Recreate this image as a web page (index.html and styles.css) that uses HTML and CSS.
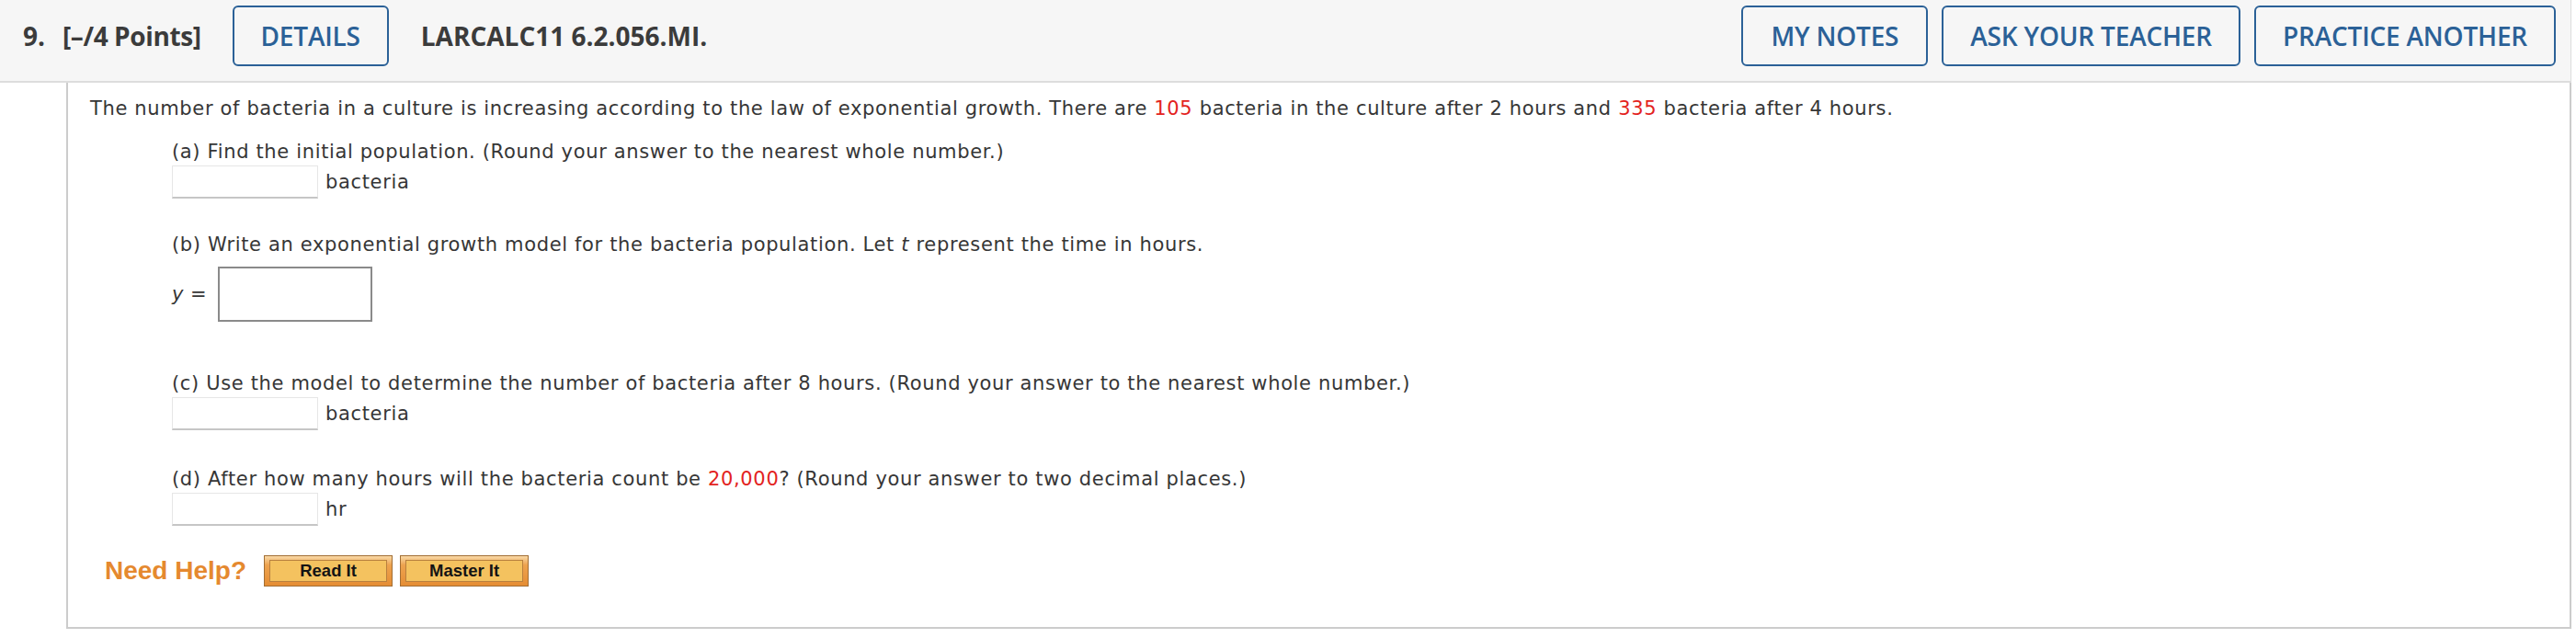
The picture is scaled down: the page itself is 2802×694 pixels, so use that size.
FILE: index.html
```html
<!DOCTYPE html>
<html>
<head>
<meta charset="utf-8">
<link rel="stylesheet" href="styles.css">
</head>
<body>
<div class="question">
  <div class="qhead">
    <div class="qhead-left">
      <span class="qnum">9.</span>
      <span class="qpts">[–/4 Points]</span>
      <span class="hbtn">DETAILS</span>
      <span class="qcode">LARCALC11 6.2.056.MI.</span>
    </div>
    <div class="qhead-right">
      <span class="hbtn">MY NOTES</span>
      <span class="hbtn">ASK YOUR TEACHER</span>
      <span class="hbtn">PRACTICE ANOTHER</span>
    </div>
  </div>
  <div class="qbody">
    <p class="intro">The number of bacteria in a culture is increasing according to the law of exponential growth. There are <span class="red">105</span> bacteria in the culture after 2 hours and <span class="red">335</span> bacteria after 4 hours.</p>

    <div class="part part-a">
      <p class="ptext">(a) Find the initial population. (Round your answer to the nearest whole number.)</p>
      <div class="arow"><span class="ans"></span><span class="unit">bacteria</span></div>
    </div>

    <div class="part part-b">
      <p class="ptext">(b) Write an exponential growth model for the bacteria population. Let <i>t</i> represent the time in hours.</p>
      <div class="yrow"><span class="ylabel"><i>y</i> =</span><span class="ybox"></span></div>
    </div>

    <div class="part part-c">
      <p class="ptext">(c) Use the model to determine the number of bacteria after 8 hours. (Round your answer to the nearest whole number.)</p>
      <div class="arow"><span class="ans"></span><span class="unit">bacteria</span></div>
    </div>

    <div class="part part-d">
      <p class="ptext">(d) After how many hours will the bacteria count be <span class="red">20,000</span>? (Round your answer to two decimal places.)</p>
      <div class="arow"><span class="ans"></span><span class="unit">hr</span></div>
    </div>

    <div class="help">
      <span class="help-label">Need Help?</span>
      <span class="hlp-btn"><span class="hlp-inner">Read It</span></span>
      <span class="hlp-btn"><span class="hlp-inner">Master It</span></span>
    </div>
  </div>
</div>
</body>
</html>
```

FILE: styles.css
```css
html, body {
  margin: 0;
  padding: 0;
  background: #ffffff;
}

.question {
  width: 2797px;
}

.qhead {
  display: flex;
  justify-content: space-between;
  align-items: center;
  box-sizing: border-box;
  height: 90px;
  padding: 7px 16px 17px 25px;
  background: #f6f6f6;
  border-bottom: 2px solid #dddddd;
  border-right: 1px solid #dddddd;
  font-family: "Open Sans", "DejaVu Sans", sans-serif;
  font-size: 28px;
  color: #3b3b3b;
}

.qhead-left,
.qhead-right {
  display: flex;
  align-items: center;
}

.qhead-right {
  gap: 15px;
}

.qnum {
  font-weight: 700;
  margin-right: 19px;
}

.qpts {
  font-weight: 700;
  letter-spacing: -0.4px;
  margin-right: 34px;
}

.qcode {
  font-weight: 700;
  margin-left: 35px;
}

.hbtn {
  display: flex;
  align-items: center;
  box-sizing: border-box;
  height: 66px;
  padding: 0 29px;
  border: 2px solid #2b6197;
  border-radius: 6px;
  color: #2b6197;
  font-weight: 600;
  letter-spacing: -0.2px;
}

.qhead-right .hbtn:first-child {
  padding: 0 30px;
}

.qbody {
  margin-left: 72px;
  padding: 13px 24px 44px 24px;
  border-left: 2px solid #cccccc;
  border-right: 2px solid #cccccc;
  border-bottom: 2px solid #cccccc;
  font-family: "DejaVu Sans", Verdana, sans-serif;
  font-size: 21px;
  letter-spacing: 0.65px;
  line-height: 30px;
  color: #363636;
}

.intro {
  margin: 0;
}

.red {
  color: #e3231e;
}

.part {
  padding-left: 89px;
}

.ptext {
  margin: 0;
}

.part-a { margin-top: 17px; }
.part-b { margin-top: 35px; }
.part-c { margin-top: 52px; }
.part-d { margin-top: 38px; }

.arow {
  display: flex;
  align-items: center;
  gap: 8px;
}

.ans {
  display: block;
  box-sizing: border-box;
  width: 159px;
  height: 36px;
  border: 1px solid #e6e6e6;
  border-bottom: 2px solid #c6c6c6;
  background: #ffffff;
}

.yrow {
  display: flex;
  align-items: center;
  gap: 12px;
  margin-top: 9px;
}

.ylabel {
  white-space: nowrap;
  letter-spacing: 0;
  word-spacing: 1px;
}

.ybox {
  display: block;
  box-sizing: border-box;
  width: 168px;
  height: 60px;
  border: 2px solid #8a8a8a;
}

.help {
  display: flex;
  align-items: center;
  margin-top: 32px;
  padding-left: 16px;
  letter-spacing: 0;
}

.help-label {
  font-family: "Liberation Sans", Arial, sans-serif;
  font-weight: 700;
  font-size: 28px;
  color: #e5892f;
  margin-right: 19px;
}

.hlp-btn {
  display: flex;
  box-sizing: border-box;
  width: 140px;
  height: 34px;
  padding: 4px 5px;
  margin-right: 8px;
  border: 1px solid #a26e34;
  background: linear-gradient(#f9d9a6 0%, #eda34f 30%, #e58d34 100%);
}

.hlp-inner {
  flex: 1;
  display: flex;
  align-items: center;
  justify-content: center;
  border: 1px solid #b8803f;
  background: #f4c25f;
  font-family: "Liberation Sans", Arial, sans-serif;
  font-weight: 700;
  font-size: 18.5px;
  color: #141414;
  line-height: 1;
}
```
